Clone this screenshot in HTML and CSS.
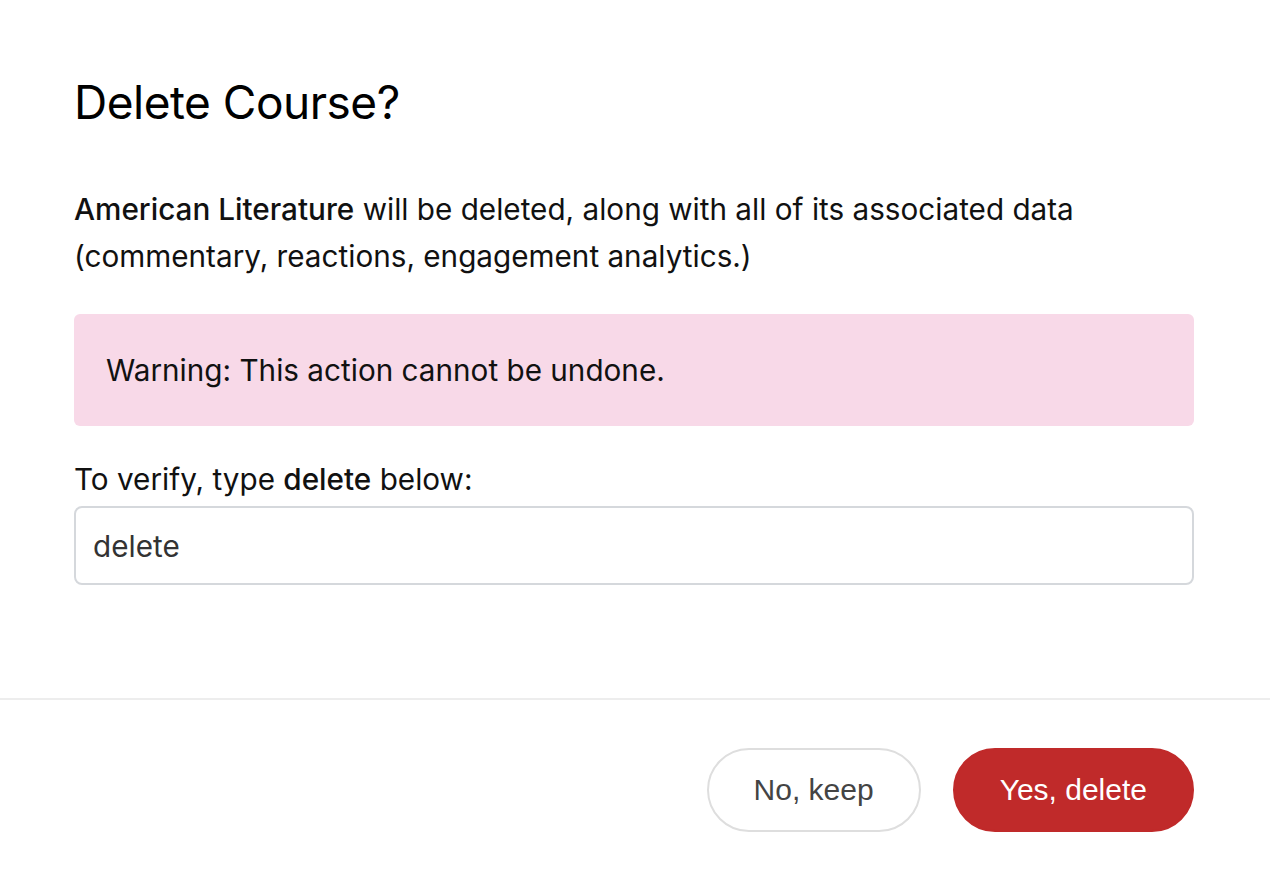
FILE: index.html
```html
<!DOCTYPE html>
<html lang="en">
<head>
    <meta charset="UTF-8">
    <meta name="viewport" content="width=device-width, initial-scale=1.0">
    <title>Delete Course?</title>
    <link rel="stylesheet" href="styles.css">
</head>

<body>
<div class="modal">
  <div class="modal-body">
    <h1 class="modal-title">Delete Course?</h1>

    <p class="modal-text">
      <b>American Literature</b> will be deleted, along with all of its associated data
      (commentary, reactions, engagement analytics.)
    </p>

    <div class="warning">Warning: This action cannot be undone.</div>

    <label for="confirm" class="verify-label">To verify, type <b>delete</b> below:</label>
    <input type="text" id="confirm" class="verify-input" value="delete">
  </div>

  <div class="modal-footer">
    <button type="button" class="btn btn-cancel">No, keep</button>
    <button type="button" class="btn btn-danger">Yes, delete</button>
  </div>
</div>
</body>
</html>
```

FILE: styles.css
```css
body {
  margin: 0;
  background: #fff;
  font-family: Inter, "Noto Sans", sans-serif;
  color: #111;
}

.modal {
  width: 1270px;
  height: 876px;
  display: flex;
  flex-direction: column;
}

.modal-body {
  padding: 75px 76px 0 74px;
  height: 698px;
  flex-shrink: 0;
  box-sizing: border-box;
  display: flex;
  flex-direction: column;
}

.modal-title {
  margin: 0;
  font-size: 46px;
  line-height: 55px;
  font-weight: 400;
  letter-spacing: -0.5px;
  color: #000;
}

.modal-text {
  margin: 56px 0 0;
  font-size: 29.7px;
  line-height: 47px;
}

.modal-text b,
.verify-label b {
  font-weight: 500;
}

.warning {
  margin-top: 34px;
  padding: 32px;
  background: #f8d9e8;
  border-radius: 6px;
  font-size: 29.7px;
  line-height: 48px;
}

.verify-label {
  margin-top: 30px;
  font-size: 29.7px;
  line-height: 47px;
}

.verify-input {
  margin-top: 3px;
  height: 79px;
  box-sizing: border-box;
  padding: 0 17px;
  border: 2px solid #d5d8dc;
  border-radius: 8px;
  font-family: inherit;
  font-size: 29.7px;
  color: #333;
  outline: none;
}

.modal-footer {
  border-top: 2px solid #ededed;
  display: flex;
  justify-content: flex-end;
  gap: 32px;
  padding: 48px 76px 0 0;
}

.btn {
  height: 84px;
  padding: 0 45px;
  border-radius: 42px;
  font-family: "Liberation Sans", Arial, sans-serif;
  font-size: 30px;
  cursor: pointer;
}

.btn-cancel {
  background: #fff;
  border: 2px solid #dedede;
  color: #444;
}

.btn-danger {
  background: #c02a2a;
  border: 2px solid #c02a2a;
  color: #fff;
}
```
